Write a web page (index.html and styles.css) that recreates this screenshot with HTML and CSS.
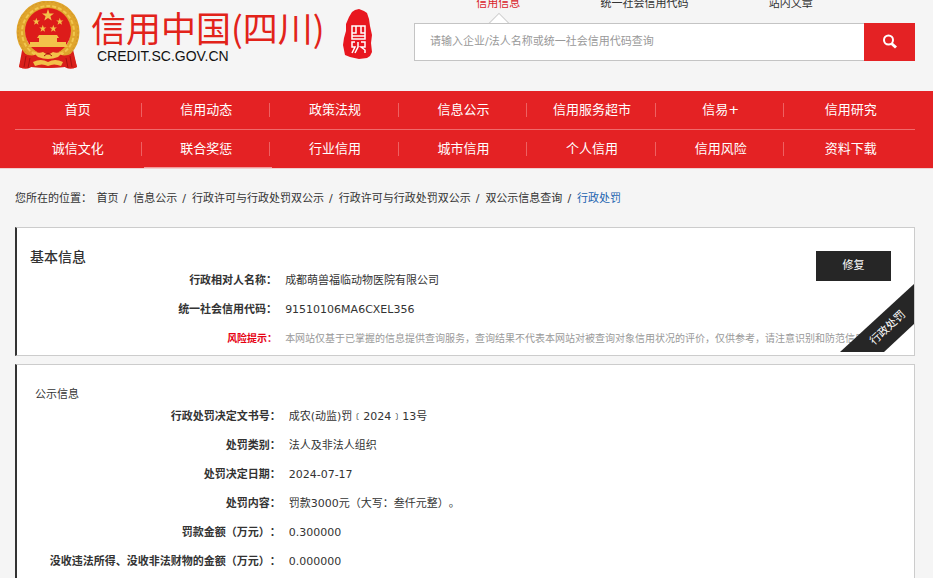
FILE: index.html
```
<!DOCTYPE html>
<html lang="zh-CN">
    <head>
        <meta charset="utf-8">
        <title>信用中国(四川)</title>
        <link rel="stylesheet" href="styles.css">
    </head>
    <body>
        <header class="header">
            <a class="logo" href="#">
                <svg class="emblem" viewBox="0 0 65 68" width="65" height="68">
                    <path d="M8 44 L57 44 L62 66 Q55 69 50 66 L33 67 L16 66 Q11 69 4 66 Z" fill="#d9201b"/>
                    <circle cx="33" cy="31" r="27" fill="none" stroke="#e0a52c" stroke-width="9"/>
                    <circle cx="33" cy="31" r="30" fill="none" stroke="#d0942a" stroke-width="1" stroke-dasharray="2 2"/>
                    <circle cx="33" cy="31" r="26" fill="none" stroke="#f2c64e" stroke-width="2" stroke-dasharray="4 2"/>
                    <circle cx="33" cy="30" r="23" fill="#dd1c1a"/>
                    <path d="M8 52 Q20 58 23 50 H43 Q46 58 58 52 L62 66 Q55 69 50 66 L33 67 L16 66 Q11 69 4 66 Z" fill="#d9201b"/>
                    <g fill="#f3c24a">
                        <path id="star" d="M33 8 L34.5 12.4 L39 12.5 L35.4 15.2 L36.7 19.6 L33 17 L29.3 19.6 L30.6 15.2 L27 12.5 L31.5 12.4 Z"/>
                        <use href="#star" transform="translate(1.5 12) scale(.6)"/>
                        <use href="#star" transform="translate(8 19) scale(.6)"/>
                        <use href="#star" transform="translate(18.5 19) scale(.6)"/>
                        <use href="#star" transform="translate(25 12) scale(.6)"/>
                        <path d="M24 34 H42 L44 37 H22 Z M24 37 H42 V41 H24 Z M15 41 H51 V43 L53 46 H13 L15 43 Z"/>
                        <path d="M17 50 Q24 53 28 51 L33 54 L38 51 Q42 53 49 50 L43 56 Q33 60 23 56 Z"/>
                        <path d="M18 61 Q26 57 33 61 Q40 57 48 61 L46 65 Q39 62 33 65 Q27 62 20 65 Z"/>
                    </g>
                    <g fill="none" stroke="#a81210" stroke-width="1">
                        <path d="M11 55 L9 66 M15 57 L13 67 M51 57 L53 67 M55 55 L57 66"/>
                        <path d="M29 55 L33 52 L37 55"/>
                    </g>
                </svg>
                <span class="logo-text">
                    <span class="logo-name">信用中国(四川)</span>
                    <span class="logo-domain">CREDIT.SC.GOV.CN</span>
                </span>
                <svg class="seal" viewBox="0 0 30 50" width="30" height="50">
                    <path d="M9 3 L12 1 L16 0 L21 2 L24 4 L26 10 L27 17 L29 26 L28 34 L29 43 L27 47 L24 49 L16 50 L7 48 L2 46 L1 41 L0 36 L1 29 L3 22 L3 15 L6 8 Z" fill="#e8161f"/>
                    <g fill="none" stroke="#fff" stroke-width="1.5">
                        <path d="M9 17 H22 V30 H9 Z M13 17 V24 H9 M18 17 V24 H22 M9 27 H22"/>
                        <path d="M12 33 H9 V38 H12 L9 44 M15 33 V38 L12 44 M18 33 H22 V38 H18 L22 41 V44"/>
                    </g>
                </svg>
            </a>
            <div class="search">
                <div class="tabs">
                    <a class="tab active" href="#">信用信息</a>
                    <a class="tab" href="#">统一社会信用代码</a>
                    <a class="tab" href="#">站内文章</a>
                </div>
                <form class="search-form">
                    <input class="search-input" type="text" aria-label="查询" placeholder="请输入企业/法人名称或统一社会信用代码查询">
                    <button class="search-btn" type="button" aria-label="搜索">
                        <svg viewBox="0 0 16 16" width="16" height="16">
                            <circle cx="6.5" cy="6" r="4.5" fill="none" stroke="#fff" stroke-width="2"/>
                            <path d="M9.5 9.5 L14 13.5" stroke="#fff" stroke-width="3"/>
                        </svg>
                    </button>
                </form>
            </div>
        </header>
        <nav class="nav">
            <ul class="nav-row">
                <li><a href="#">首页</a></li>
                <li><a href="#">信用动态</a></li>
                <li><a href="#">政策法规</a></li>
                <li><a href="#">信息公示</a></li>
                <li><a href="#">信用服务超市</a></li>
                <li><a href="#">信易+</a></li>
                <li><a href="#">信用研究</a></li>
            </ul>
            <ul class="nav-row">
                <li><a href="#">诚信文化</a></li>
                <li class="current"><a href="#">联合奖惩</a></li>
                <li><a href="#">行业信用</a></li>
                <li><a href="#">城市信用</a></li>
                <li><a href="#">个人信用</a></li>
                <li><a href="#">信用风险</a></li>
                <li><a href="#">资料下载</a></li>
            </ul>
        </nav>
        <main class="main">
            <div class="crumbs">
                <span class="crumbs-label">您所在的位置：</span>
                <a href="#">首页</a><i>/</i><a href="#">信息公示</a><i>/</i><a href="#">行政许可与行政处罚双公示</a><i>/</i><a href="#">行政许可与行政处罚双公示</a><i>/</i><a href="#">双公示信息查询</a><i>/</i><a class="here" href="#">行政处罚</a>
            </div>
            <section class="card basic">
                <div class="card-head">
                    <h2>基本信息</h2>
                    <button class="repair" type="button">修复</button>
                </div>
                <dl class="fields">
                    <dt>行政相对人名称：</dt>
                    <dd>成都萌兽福临动物医院有限公司</dd>
                    <dt>统一社会信用代码：</dt>
                    <dd>91510106MA6CXEL356</dd>
                    <dt class="warn">风险提示：</dt>
                    <dd class="tip">本网站仅基于已掌握的信息提供查询服务，查询结果不代表本网站对被查询对象信用状况的评价，仅供参考，请注意识别和防范信用风险</dd>
                </dl>
                <div class="ribbon"><span>行政处罚</span></div>
            </section>
            <section class="card detail">
                <h3>公示信息</h3>
                <dl class="fields">
                    <dt>行政处罚决定文书号：</dt>
                    <dd>成农(动监)罚﹝2024﹞13号</dd>
                    <dt>处罚类别：</dt>
                    <dd>法人及非法人组织</dd>
                    <dt>处罚决定日期：</dt>
                    <dd>2024-07-17</dd>
                    <dt>处罚内容：</dt>
                    <dd>罚款3000元（大写：叁仟元整）。</dd>
                    <dt>罚款金额（万元）：</dt>
                    <dd>0.300000</dd>
                    <dt>没收违法所得、没收非法财物的金额（万元）：</dt>
                    <dd>0.000000</dd>
                </dl>
            </section>
        </main>
    </body>
</html>
```
FILE: styles.css
```
*{
    box-sizing: border-box;
}
body{
    margin: 0;
    background-color: #f5f5f5;
    color: #333;
    font: 11px/20px "DejaVu Sans", "Noto Sans CJK SC", sans-serif;
    text-spacing-trim: space-all;
}
a{
    color: inherit;
    text-decoration: none;
}
ul, dl, dd, h2, h3{
    margin: 0;
    padding: 0;
}
ul{
    list-style: none;
}

/* header */
.header{
    display: flex;
    justify-content: space-between;
    margin: 0 18px 0 15px;
    height: 91px;
}
.logo{
    display: flex;
    align-items: flex-start;
    padding-top: 1px;
}
.logo-text{
    display: flex;
    flex-direction: column;
    margin: 5px 18px 0 11px;
}
.logo-name{
    color: #e2231a;
    font: 35px/42px "Noto Sans CJK SC", sans-serif;
}
.logo-domain{
    margin-left: 6px;
    color: #111;
    font: 14px/16px "Liberation Sans", sans-serif;
}
.seal{
    margin-top: 8px;
}
.search{
    width: 501px;
}
.tabs{
    display: flex;
    padding: 0 51px 15px 11px;
    line-height: 8px;
}
.tab{
    flex: 1;
    text-align: center;
    position: relative;
}
.tab.active{
    color: #d9232a;
}
.tab.active::after{
    content: "";
    position: absolute;
    left: 50%;
    top: 16px;
    width: 14px;
    height: 14px;
    margin-left: -7px;
    background-color: white;
    border: 1px solid #ccc;
    transform: rotate(45deg);
}
.search-form{
    display: flex;
    height: 38px;
    position: relative;
}
.search-input{
    flex: 1;
    min-width: 0;
    padding: 0 15px;
    background-color: white;
    border: 1px solid #c4c4c4;
    border-right: 0;
    font: inherit;
    outline: none;
}
.search-input::placeholder{
    color: #999;
}
.search-btn{
    width: 51px;
    padding: 0;
    border: 0;
    background-color: #e42224;
}
.search-btn svg{
    display: block;
    margin: 0 auto;
}

/* nav */
.nav{
    padding: 0 18px 0 15px;
    background-color: #e42224;
    border-bottom: 1px solid #f0cfcf;
    color: white;
    font-size: 13px;
}
.nav-row{
    display: grid;
    grid-template-columns: repeat(7, 1fr);
}
.nav-row + .nav-row{
    border-top: 1px solid #f06a6b;
}
.nav-row li{
    display: flex;
    align-items: center;
    height: 38px;
}
.nav-row a{
    flex: 1;
    text-align: center;
}
.nav-row li:not(:last-child)::after{
    content: "";
    width: 1px;
    height: 14px;
    margin-right: 2px;
    background-color: #ee6162;
}
.nav-row .current{
    box-shadow: inset 0 -1px #f29a9a;
}

/* content */
.main{
    margin: 0 18px 0 15px;
}
.crumbs{
    padding: 20px 0 18px;
    white-space: nowrap;
}
.crumbs-label{
    margin-right: 1px;
}
.crumbs i{
    margin: 0 6px 0 5px;
    font-style: normal;
}
.crumbs .here{
    color: #1c64b0;
}
.card{
    position: relative;
    margin-bottom: 8px;
    background-color: white;
    border: 1px solid #ccc;
    border-left: 2px solid #333;
}
.basic{
    padding: 19px 0 2px;
}
.card-head{
    display: flex;
    justify-content: space-between;
    align-items: flex-start;
    height: 19px;
    padding: 0 23px 0 13px;
}
.card-head h2{
    font-size: 14px;
    font-weight: 500;
    line-height: 20px;
}
.repair{
    width: 75px;
    height: 30px;
    margin-top: 4px;
    padding: 0;
    border: 0;
    background-color: #262626;
    color: white;
    font: inherit;
}
.fields{
    display: grid;
    grid-template-columns: 29% 1fr;
    column-gap: 8px;
    line-height: 29px;
    white-space: nowrap;
}
.fields dt{
    text-align: right;
    font-weight: bold;
}
.fields dd{
    min-width: 0;
    overflow: hidden;
}
.fields .warn{
    color: #e60012;
    font-size: 10px;
}
.fields .tip{
    color: #999;
    font-size: 10px;
}
.ribbon{
    position: absolute;
    right: 0;
    bottom: 3px;
    width: 74px;
    height: 68px;
    background-color: #262626;
    clip-path: polygon(100% 0, 100% 40px, 44px 100%, 0 100%);
    color: white;
}
.ribbon span{
    position: absolute;
    left: 26px;
    top: 34px;
    transform: rotate(-43deg);
}
.detail{
    margin-bottom: 0;
    padding: 22px 0 20px 5px;
}
.detail h3{
    padding-left: 13px;
    font-size: 11px;
    font-weight: normal;
    line-height: 15px;
}
```
